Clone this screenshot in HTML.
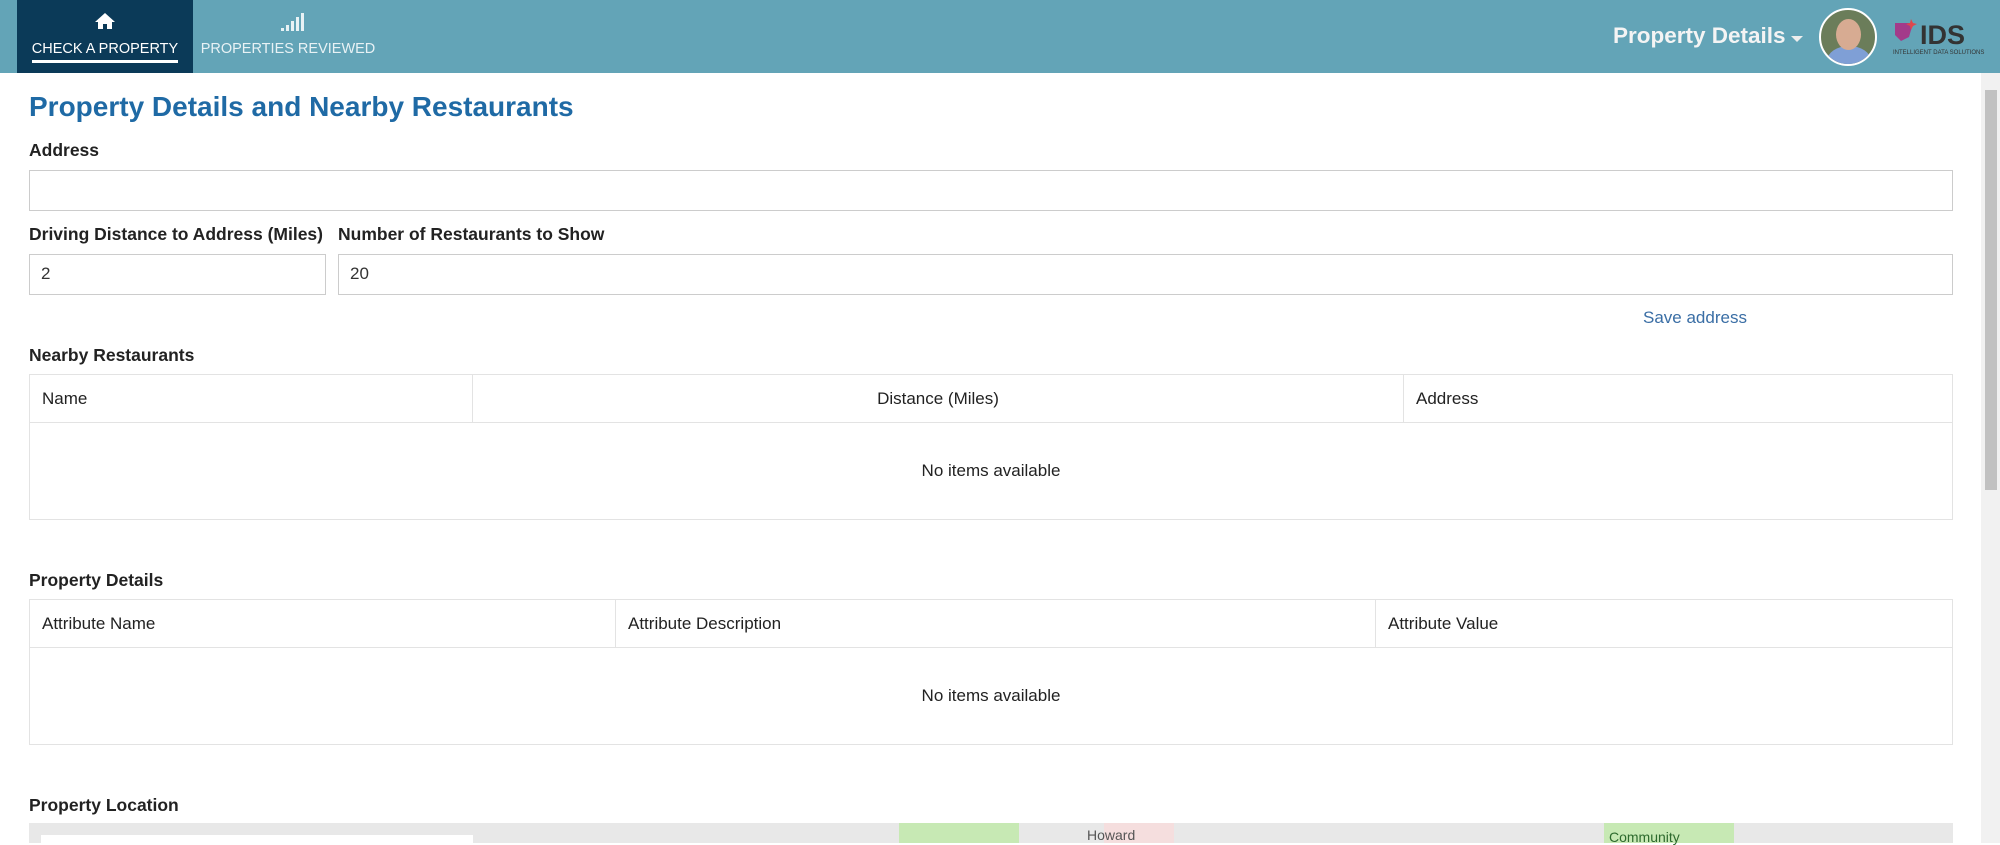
<!DOCTYPE html>
<html><head><style>
*{box-sizing:border-box;margin:0;padding:0}
body{width:2000px;height:843px;overflow:hidden;background:#fff;font-family:"Liberation Sans",sans-serif;color:#222;position:relative}
.hdr{position:absolute;left:0;top:0;width:2000px;height:73px;background:#63a4b7}
.tab{position:absolute;top:0;height:73px;color:#fff;font-size:14.5px;text-align:center}
.abs{position:absolute}
.lbl{position:absolute;left:29px;font-size:17.5px;font-weight:bold;color:#222}
.inp{position:absolute;border:1px solid #ccc;background:#fff;font-size:17px;padding-left:11px;line-height:38px;color:#333}
.tbl{position:absolute;left:29px;width:1924px;border:1px solid #e3e3e3}
.th{position:absolute;top:0;height:48px;line-height:48px;font-size:17px;padding-left:12px;border-right:1px solid #e3e3e3}
.empty{position:absolute;left:0;width:100%;text-align:center;font-size:17px}
</style></head><body>
<div class="hdr">
 <div class="tab" style="left:17px;width:176px;background:#0b3a58">
  <svg class="abs" style="left:77px;top:12px" width="22" height="18" viewBox="0 0 22 18"><path d="M11 1L1 10h3v7h5v-5h4v5h5v-7h3z" fill="#fff"/></svg>
  <div class="abs" style="left:0;width:176px;top:41px">CHECK A PROPERTY</div>
  <div class="abs" style="left:15px;width:146px;top:60px;height:3px;background:#fff"></div>
 </div>
 <div class="tab" style="left:193px;width:190px;color:#e8f2f5">
  <svg class="abs" style="left:88px;top:12px" width="24" height="20" viewBox="0 0 24 20"><rect x="0" y="16" width="3" height="3" fill="#e8f2f5"/><rect x="5" y="13" width="3" height="6" fill="#e8f2f5"/><rect x="10" y="9" width="3" height="10" fill="#e8f2f5"/><rect x="15" y="5" width="3" height="14" fill="#e8f2f5"/><rect x="20" y="1" width="3" height="18" fill="#e8f2f5"/></svg>
  <div class="abs" style="left:0;width:190px;top:41px">PROPERTIES REVIEWED</div>
 </div>
 <div class="abs" style="left:1613px;top:23px;color:#f4f4f4;font-size:22.5px;font-weight:bold">Property Details</div>
 <div class="abs" style="left:1791px;top:36px;width:0;height:0;border-left:6px solid transparent;border-right:6px solid transparent;border-top:6px solid #eee"></div>
 <div class="abs" style="left:1819px;top:8px;width:58px;height:58px;border-radius:50%;border:2px solid #fff;overflow:hidden;background:#6b7d5a">
  <div class="abs" style="left:6px;top:36px;width:44px;height:30px;border-radius:50% 50% 0 0;background:#7f9fd6"></div>
  <div class="abs" style="left:15px;top:9px;width:25px;height:31px;border-radius:50%;background:#d7ab92"></div>
 </div>
 <svg class="abs" style="left:1893px;top:17px" width="92" height="40" viewBox="0 0 92 40"><path d="M2 6h18l-4 14-8 4-6-6z" fill="#a33a8a"/><path d="M18 2l2 4 4 1-4 2-2 4-1-4-4-2 4-1z" fill="#e0474c"/><text x="27" y="27" font-family="Liberation Sans" font-weight="bold" font-size="27" fill="#333">IDS</text><text x="0" y="37" font-family="Liberation Sans" font-size="6" fill="#333">INTELLIGENT DATA SOLUTIONS</text></svg>
</div>
<div class="abs" style="left:1981px;top:73px;width:19px;height:770px;background:#f1f1f1"><div class="abs" style="left:4px;top:17px;width:12px;height:400px;background:#c1c1c1"></div></div>

<div class="abs" style="left:29px;top:91px;font-size:28px;font-weight:bold;color:#1f6aa5">Property Details and Nearby Restaurants</div>
<div class="lbl" style="top:140px">Address</div>
<div class="inp" style="left:29px;top:170px;width:1924px;height:41px"></div>
<div class="lbl" style="top:224px">Driving Distance to Address (Miles)</div>
<div class="lbl" style="top:224px;left:338px">Number of Restaurants to Show</div>
<div class="inp" style="left:29px;top:254px;width:297px;height:41px">2</div>
<div class="inp" style="left:338px;top:254px;width:1615px;height:41px">20</div>
<div class="abs" style="left:1643px;top:308px;font-size:17px;color:#3a6ea5">Save address</div>

<div class="lbl" style="top:345px">Nearby Restaurants</div>
<div class="tbl" style="top:374px;height:146px">
 <div class="abs" style="left:0;top:47px;width:100%;border-top:1px solid #e3e3e3"></div>
 <div class="th" style="left:0;width:443px">Name</div>
 <div class="th" style="left:443px;width:931px;text-align:center;padding:0">Distance (Miles)</div>
 <div class="th" style="left:1374px;width:550px;border:none">Address</div>
 <div class="empty" style="top:86px">No items available</div>
</div>

<div class="lbl" style="top:570px">Property Details</div>
<div class="tbl" style="top:599px;height:146px">
 <div class="abs" style="left:0;top:47px;width:100%;border-top:1px solid #e3e3e3"></div>
 <div class="th" style="left:0;width:586px">Attribute Name</div>
 <div class="th" style="left:586px;width:760px">Attribute Description</div>
 <div class="th" style="left:1346px;width:578px;border:none">Attribute Value</div>
 <div class="empty" style="top:86px">No items available</div>
</div>

<div class="lbl" style="top:795px">Property Location</div>
<div class="abs" style="left:29px;top:823px;width:1924px;height:20px;background:#e8e8e8">
 <div class="abs" style="left:870px;top:0;width:120px;height:20px;background:#c7e9b4"></div>
 <div class="abs" style="left:1575px;top:0;width:130px;height:20px;background:#c7e9b4"></div>
 <div class="abs" style="left:1075px;top:0;width:70px;height:20px;background:#f5dede"></div>
 <div class="abs" style="left:12px;top:12px;width:432px;height:8px;background:#fff"></div>
 <div class="abs" style="left:1058px;top:4px;font-size:14px;color:#555">Howard</div>
 <div class="abs" style="left:1580px;top:6px;font-size:14px;color:#2d6a2d">Community</div>
</div>
</body></html>
